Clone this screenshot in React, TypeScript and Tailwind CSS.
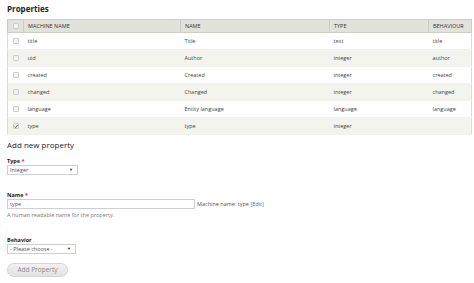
const rows = [
  { machine: "title", name: "Title", type: "text", behaviour: "title", checked: false },
  { machine: "uid", name: "Author", type: "integer", behaviour: "author", checked: false },
  { machine: "created", name: "Created", type: "integer", behaviour: "created", checked: false },
  { machine: "changed", name: "Changed", type: "integer", behaviour: "changed", checked: false },
  { machine: "language", name: "Entity language", type: "language", behaviour: "language", checked: false },
  { machine: "type", name: "type", type: "integer", behaviour: "", checked: true },
];

function Check({ checked }: { checked?: boolean }) {
  return (
    <span className="flex h-[6px] w-[6px] items-center justify-center rounded-[1px] border border-[#cdcdcd] bg-[#f2f2f2]">
      {checked && (
        <svg viewBox="0 0 8 8" className="h-[7px] w-[7px]">
          <path d="M1 4 L3 6.5 L7.5 0.5" fill="none" stroke="#444" strokeWidth="1.5" />
        </svg>
      )}
    </span>
  );
}

function Select({ value, width }: { value: string; width: string }) {
  return (
    <div
      className={`flex h-[10px] items-center justify-between border border-[#cfcfcf] bg-white pl-[2px] pr-[4px] text-[5.5px] text-[#555] ${width}`}
    >
      <span>{value}</span>
      <span className="text-[4px] text-[#222]">▼</span>
    </div>
  );
}

export default function App() {
  return (
    <div className="h-[283px] w-[474px] bg-white pl-[7px] pr-[2px] pt-[3px] font-['Open_Sans',sans-serif] text-[#444]">
      <h2 className="text-[8px] font-bold leading-[12px] text-[#222]">Properties</h2>

      <table className="mt-[4px] w-full border-collapse border border-[#dcdcd7] text-left text-[5.5px]">
        <thead>
          <tr className="h-[13px] bg-[#e1e2dc] text-[#333]">
            <th className="w-[16px] border border-[#cdcdc8] pl-[5px] font-normal">
              <Check />
            </th>
            <th className="w-[157px] border border-[#cdcdc8] pl-[4px] font-normal">MACHINE NAME</th>
            <th className="w-[149px] border border-[#cdcdc8] pl-[4px] font-normal">NAME</th>
            <th className="w-[99px] border border-[#cdcdc8] pl-[4px] font-normal">TYPE</th>
            <th className="border border-[#cdcdc8] pl-[4px] font-normal">BEHAVIOUR</th>
          </tr>
        </thead>
        <tbody>
          {rows.map((r, i) => (
            <tr
              key={r.machine}
              className={`h-[17px] border-b border-[#f0f0ec] ${i % 2 === 1 ? "bg-[#f3f4ee]" : "bg-white"}`}
            >
              <td className="pl-[5px]">
                <Check checked={r.checked} />
              </td>
              <td className="pl-[4px]">{r.machine}</td>
              <td className="pl-[4px]">{r.name}</td>
              <td className="pl-[4px]">{r.type}</td>
              <td className="pl-[4px]">{r.behaviour}</td>
            </tr>
          ))}
        </tbody>
      </table>

      <h2 className="mt-[4px] text-[8px] leading-[12px] text-[#222]">Add new property</h2>

      <div className="mt-[6px]">
        <div className="text-[5.5px] font-bold leading-[8px] text-[#222]">
          Type <span className="text-[#e0291c]">*</span>
        </div>
        <Select value="Integer" width="w-[71px]" />
      </div>

      <div className="mt-[16px]">
        <div className="text-[5.5px] font-bold leading-[8px] text-[#222]">
          Name <span className="text-[#e0291c]">*</span>
        </div>
        <div className="flex items-center gap-[2px]">
          <div className="flex h-[10px] w-[188px] items-center border border-[#cfcfcf] bg-white pl-[2px] text-[5.5px] text-[#555]">
            type
          </div>
          <span className="text-[5.5px] text-[#555]">
            Machine name: type <span className="text-[#2f6fb4]">[Edit]</span>
          </span>
        </div>
        <div className="mt-[2px] text-[5.5px] leading-[8px] text-[#777]">
          A human readable name for the property.
        </div>
      </div>

      <div className="mt-[17px]">
        <div className="text-[5.5px] font-bold leading-[8px] text-[#222]">Behavior</div>
        <Select value="- Please choose -" width="w-[69px]" />
      </div>

      <button className="mt-[9px] flex h-[14px] w-[61px] items-center justify-center rounded-full border border-[#d4d4d4] bg-gradient-to-b from-[#f2f2f2] to-[#e2e2e2] text-[6.5px] text-[#8a8a8a]">
        Add Property
      </button>
    </div>
  );
}
